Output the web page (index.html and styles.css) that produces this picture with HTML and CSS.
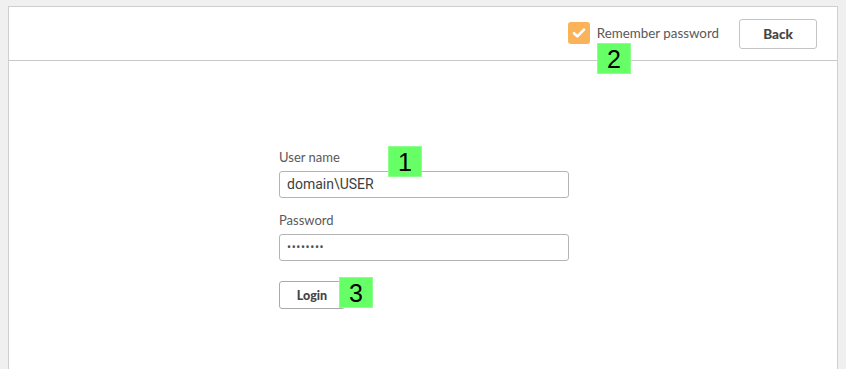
FILE: index.html
```html
<!DOCTYPE html>
<html>
<head>
<meta charset="utf-8">
<link rel="stylesheet" href="styles.css">
</head>
<body>
<div class="panel">
  <div class="header">
    <label class="remember">
      <span class="check">
        <svg width="14" height="12" viewBox="0 0 14 12"><path d="M2 6.2 L5.4 9.4 L12 2.6" fill="none" stroke="#fff" stroke-width="2.6" stroke-linecap="round" stroke-linejoin="round"/></svg>
      </span>
      <span class="remember-text">Remember password</span>
      <span class="badge badge-2">2</span>
    </label>
    <button class="btn btn-back">Back</button>
  </div>
  <div class="content">
    <form class="form">
      <div class="field">
        <div class="label">User name <span class="badge badge-1">1</span></div>
        <div class="input">domain\USER</div>
      </div>
      <div class="field">
        <div class="label">Password</div>
        <div class="input dots">••••••••</div>
      </div>
      <div class="actions">
        <button type="button" class="btn btn-login">Login</button>
        <span class="badge badge-3">3</span>
      </div>
    </form>
  </div>
</div>
</body>
</html>
```
FILE: styles.css
```css
html, body {
  margin: 0;
  padding: 0;
  height: 100%;
  background: #f0f0f0;
  font-family: Lato, "Open Sans", Arial, sans-serif;
  overflow: hidden;
}
.panel {
  box-sizing: border-box;
  margin: 6px 0 0 8px;
  width: 830px;
  height: calc(100% - 6px);
  background: #fff;
  border: 1px solid #cfcfcf;
  border-bottom: none;
}
.header {
  height: 53px;
  border-bottom: 1px solid #c8c8c8;
  display: flex;
  align-items: center;
  justify-content: flex-end;
  padding-right: 20px;
}
.remember {
  position: relative;
  display: flex;
  align-items: center;
  margin-right: 20px;
  margin-top: -1px;
}
.check {
  width: 22px;
  height: 22px;
  border-radius: 3px;
  background: #fbb35a;
  display: flex;
  align-items: center;
  justify-content: center;
  margin-right: 7px;
}
.remember-text {
  font-size: 13.35px;
  color: #595959;
}
.btn {
  font-family: Lato, "Open Sans", Arial, sans-serif;
  background: #fff;
  border: 1px solid #c4c4c4;
  border-radius: 3px;
  color: #454545;
  font-weight: 900;
  font-size: 13.5px;
  cursor: pointer;
}
.btn-back {
  width: 78px;
  height: 30px;
  margin-top: 1px;
}
.content {
  display: flex;
  justify-content: center;
  padding-top: 88px;
  padding-left: 2px;
}
.form {
  width: 290px;
  margin: 0;
}
.field {
  margin-bottom: 14px;
}
.label {
  position: relative;
  font-size: 13px;
  color: #595959;
  height: 16px;
  line-height: 16px;
  margin-bottom: 6px;
}
.input {
  box-sizing: border-box;
  height: 27px;
  border: 1px solid #b4b4b4;
  border-radius: 3px;
  padding: 0 7px;
  font-family: Roboto, Arial, sans-serif;
  font-size: 14px;
  line-height: 25px;
  color: #404040;
}
.dots {
  font-size: 12px;
  letter-spacing: 0.6px;
  color: #505050;
}
.actions {
  position: relative;
  padding-top: 6px;
}
.btn-login {
  width: 66px;
  height: 28px;
  font-size: 12.5px;
  border-color: #aaa;
}
.badge {
  position: absolute;
  width: 34px;
  height: 31px;
  background: #66ff66;
  border: 1px solid #8cff8c;
  box-sizing: border-box;
  color: #000;
  font-family: "Liberation Sans", Arial, sans-serif;
  font-size: 25px;
  line-height: 30px;
  text-align: center;
  font-weight: normal;
}
.badge-2 {
  left: 29px;
  top: 21px;
}
.badge-1 {
  left: 109px;
  top: -3px;
}
.badge-3 {
  left: 60px;
  top: 2px;
}
```
